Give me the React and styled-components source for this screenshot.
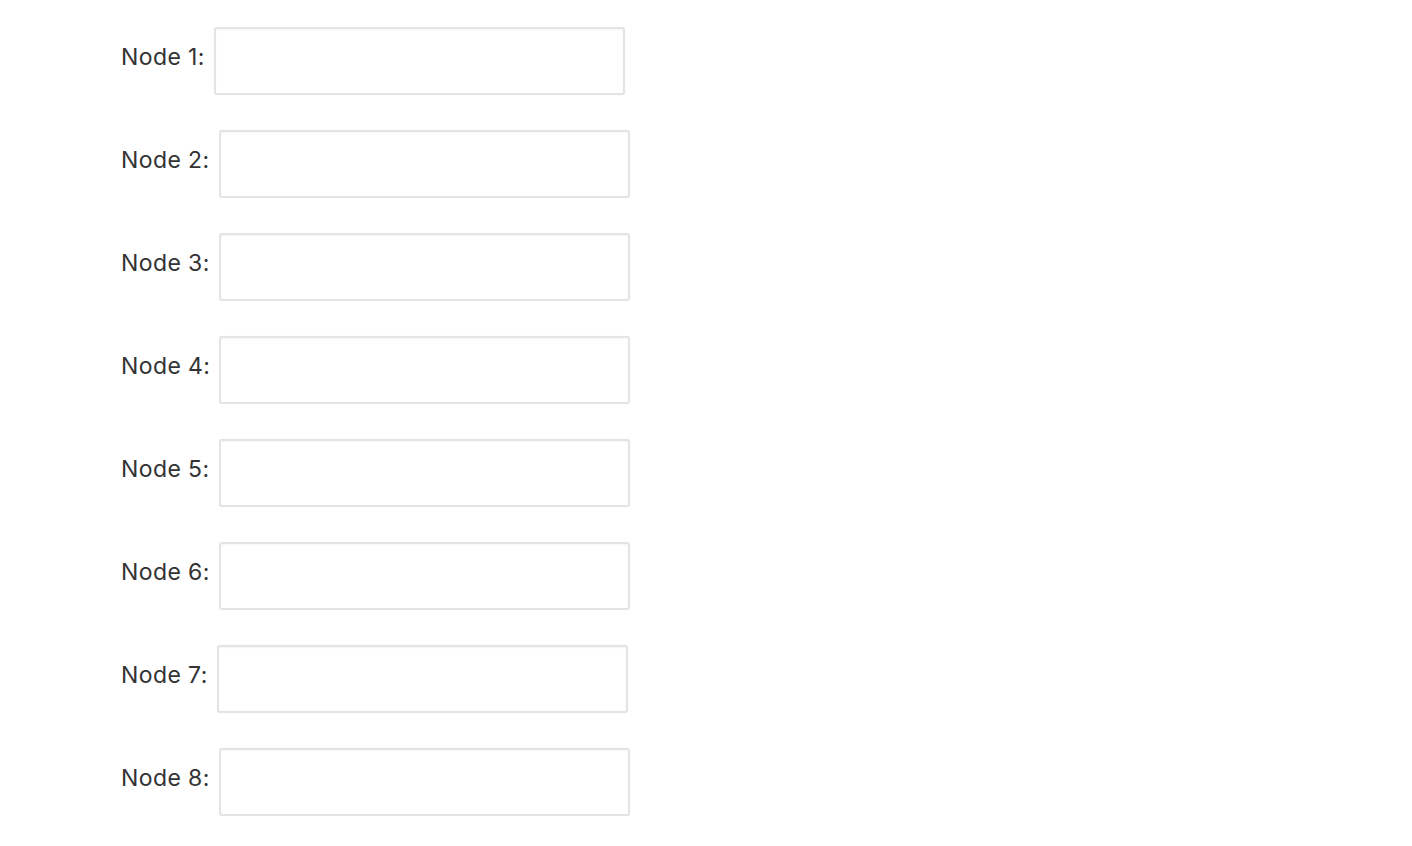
import React from "react";
import styled, { createGlobalStyle } from "styled-components";

const GlobalStyle = createGlobalStyle`
  body {
    margin: 0;
    background: #ffffff;
    font-family: Inter, "Noto Sans", sans-serif;
  }
`;

const Form = styled.div`
  display: flex;
  flex-direction: column;
  gap: 35px;
  padding: 27px 0 0 121px;
`;

const Row = styled.div`
  display: flex;
  align-items: flex-start;
  gap: 9px;
`;

const Label = styled.label`
  margin-top: 17px;
  font-size: 23px;
  line-height: 26px;
  letter-spacing: 0.4px;
  color: #333333;
  white-space: nowrap;
`;

const NodeInput = styled.input`
  box-sizing: border-box;
  width: 411px;
  height: 68px;
  padding: 0 12px;
  border: 2px solid #e4e4e4;
  border-radius: 3px;
  background: #ffffff;
  box-shadow: 0 0 1px rgba(0, 0, 0, 0.08), inset 0 1px 2px rgba(0, 0, 0, 0.04);
  font-family: inherit;
  font-size: 22px;
  outline: none;
`;

const nodes = [1, 2, 3, 4, 5, 6, 7, 8];

const App = () => {
  return (
    <>
      <GlobalStyle />
      <Form>
        {nodes.map((n) => (
          <Row key={n}>
            <Label htmlFor={`node-${n}`}>Node {n}:</Label>
            <NodeInput id={`node-${n}`} type="text" />
          </Row>
        ))}
      </Form>
    </>
  );
};

export default App;
